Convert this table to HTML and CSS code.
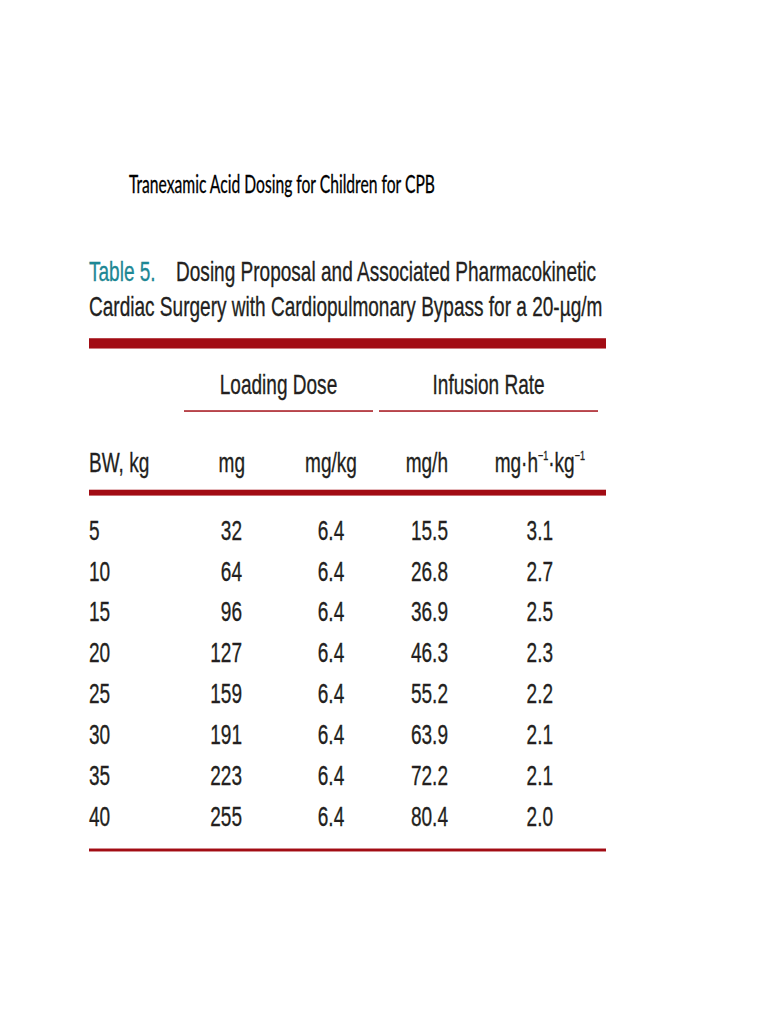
FILE: index.html
```html
<!DOCTYPE html>
<html lang="en">
<head>
<meta charset="utf-8">
<title>Tranexamic Acid Dosing for Children for CPB</title>
<link rel="stylesheet" href="styles.css">
</head>
<body>
<div class="slide">
  <h1 class="deck-title">Tranexamic Acid Dosing for Children for CPB</h1>
  <div class="table-block">
    <p class="caption"><span class="label">Table 5.</span>Dosing Proposal and Associated Pharmacokinetic<br>Cardiac Surgery with Cardiopulmonary Bypass for a 20-µg/m</p>
    <div class="bar bar-top"></div>
    <div class="groups">
      <div class="group group-loading">Loading Dose</div>
      <div class="group group-infusion">Infusion Rate</div>
    </div>
    <div class="row head">
      <div class="c c1">BW, kg</div>
      <div class="c c2">mg</div>
      <div class="c c3">mg/kg</div>
      <div class="c c4">mg/h</div>
      <div class="c c5">mg·h<sup>−1</sup>·kg<sup>−1</sup></div>
    </div>
    <div class="bar bar-mid"></div>
    <div class="body">
      <div class="row"><div class="c c1">5</div><div class="c c2">32</div><div class="c c3">6.4</div><div class="c c4">15.5</div><div class="c c5">3.1</div></div>
      <div class="row"><div class="c c1">10</div><div class="c c2">64</div><div class="c c3">6.4</div><div class="c c4">26.8</div><div class="c c5">2.7</div></div>
      <div class="row"><div class="c c1">15</div><div class="c c2">96</div><div class="c c3">6.4</div><div class="c c4">36.9</div><div class="c c5">2.5</div></div>
      <div class="row"><div class="c c1">20</div><div class="c c2">127</div><div class="c c3">6.4</div><div class="c c4">46.3</div><div class="c c5">2.3</div></div>
      <div class="row"><div class="c c1">25</div><div class="c c2">159</div><div class="c c3">6.4</div><div class="c c4">55.2</div><div class="c c5">2.2</div></div>
      <div class="row"><div class="c c1">30</div><div class="c c2">191</div><div class="c c3">6.4</div><div class="c c4">63.9</div><div class="c c5">2.1</div></div>
      <div class="row"><div class="c c1">35</div><div class="c c2">223</div><div class="c c3">6.4</div><div class="c c4">72.2</div><div class="c c5">2.1</div></div>
      <div class="row"><div class="c c1">40</div><div class="c c2">255</div><div class="c c3">6.4</div><div class="c c4">80.4</div><div class="c c5">2.0</div></div>
    </div>
    <div class="bar bar-bottom"></div>
  </div>
</div>
</body>
</html>
```
FILE: styles.css
```css
html, body {
  margin: 0;
  padding: 0;
  background: #ffffff;
}

body {
  min-height: 1024px;
}

/* The source slide is shown horizontally compressed: text is set at its
   compressed width and stretched vertically (1 / 0.68). */
.slide {
  padding-top: 116.28px;
  padding-bottom: 100px;
  transform: scaleY(1.470588);
  transform-origin: 0 0;
}

.deck-title {
  margin: 0 0 0 129px;
  font-family: Lato, "Open Sans", sans-serif;
  font-weight: 400;
  font-size: 15.65px;
  line-height: 19.04px;
  color: #000000;
  -webkit-text-stroke: 0.2px #000000;
  transform: scaleY(1.07);
  transform-origin: 0 15.58px;
}

.table-block {
  width: 517px;
  margin-left: 89px;
  font-family: "Liberation Sans", Arial, Helvetica, sans-serif;
  font-size: 19.04px;
  color: #231f20;
  -webkit-text-stroke: 0.22px #231f20;
}

.caption {
  margin: 38.08px 0 0;
  line-height: 23.8px;
  white-space: nowrap;
}

.caption .label {
  color: #1d8794;
  -webkit-text-stroke: 0.22px #1d8794;
  margin-right: 20.4px;
}

.bar {
  background: #a20c14;
}

.bar-top {
  margin-top: 8.84px;
  height: 7.48px;
}

.groups {
  display: flex;
  gap: 6.1px;
  margin-top: 12.92px;
  padding-left: 95px;
  line-height: 23.12px;
}

.group {
  text-align: center;
  padding-bottom: 7.48px;
  background: linear-gradient(#a20c14, #a20c14) left bottom / 100% 1.36px no-repeat;
}

.group-loading {
  width: 189px;
}

.group-infusion {
  width: 219px;
}

.row {
  display: grid;
  grid-template-columns: 94px 78px 140px 57px 148px;
  line-height: 27.88px;
  white-space: nowrap;
}

.row.head {
  margin-top: 22.44px;
  line-height: 23.12px;
}

.c1 { text-align: left; }
.c2 { text-align: right; padding-right: 19px; }
.c3 { text-align: center; }
.c4 { text-align: right; padding-right: 10px; }
.c5 { text-align: center; padding-left: 15.6px; }

.head .c2 { padding-right: 16px; }

.c5 sup {
  font-size: 9px;
  line-height: 0;
  vertical-align: 8.2px;
}

.bar-mid {
  margin-top: 6.8px;
  height: 4.08px;
}

.body {
  padding-top: 9.52px;
}

.bar-bottom {
  margin-top: 6.8px;
  height: 2.72px;
}
```
